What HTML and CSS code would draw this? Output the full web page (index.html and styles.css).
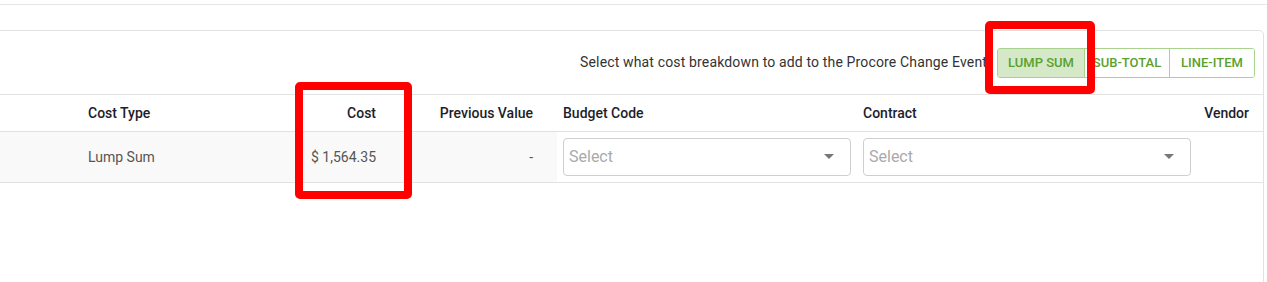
FILE: index.html
```html
<!DOCTYPE html>
<html>
<head>
<meta charset="utf-8">
<link rel="stylesheet" href="styles.css">
</head>
<body>
<div class="topbar"></div>
<div class="card">
  <div class="toolbar">
    <span class="toolbar-label">Select what cost breakdown to add to the Procore Change Event</span>
    <div class="btn-group">
      <button class="btn active">LUMP SUM</button>
      <button class="btn">SUB-TOTAL</button>
      <button class="btn">LINE-ITEM</button>
    </div>
  </div>
  <div class="table">
    <div class="row head">
      <div class="cell c0"></div>
      <div class="cell c-type">Cost Type</div>
      <div class="cell c-cost">Cost</div>
      <div class="cell c-prev">Previous Value</div>
      <div class="cell c-budget">Budget Code</div>
      <div class="cell c-contract">Contract</div>
      <div class="cell c-vendor">Vendor</div>
    </div>
    <div class="row body">
      <div class="cell c0 shade"></div>
      <div class="cell c-type shade">Lump Sum</div>
      <div class="cell c-cost shade">$ 1,564.35</div>
      <div class="cell c-prev shade">-</div>
      <div class="cell c-budget">
        <div class="select select-budget"><span>Select</span><i class="caret"></i></div>
      </div>
      <div class="cell c-contract">
        <div class="select select-contract"><span>Select</span><i class="caret"></i></div>
      </div>
      <div class="cell c-vendor"></div>
    </div>
  </div>
</div>
<div class="mark mark-cost"></div>
<div class="mark mark-lump"></div>
</body>
</html>
```
FILE: styles.css
```css
html, body {
  margin: 0;
  padding: 0;
  background: #fff;
  font-family: Roboto, "Liberation Sans", Arial, sans-serif;
  width: 1267px;
  height: 282px;
  overflow: hidden;
  position: relative;
}

.topbar {
  height: 4px;
  border-bottom: 1px solid #e6e6e6;
  margin-bottom: 25px;
}

.card {
  width: 1264px;
  height: 260px;
  border: 1px solid #e2e2e2;
  border-left: 0;
  border-radius: 0 5px 0 0;
  box-sizing: border-box;
}

.toolbar {
  height: 63px;
  display: flex;
  align-items: center;
  justify-content: flex-end;
  gap: 10px;
  padding-right: 8px;
  border-bottom: 1px solid #e2e2e2;
}

.toolbar-label {
  font-size: 14px;
  letter-spacing: 0.15px;
  color: #333;
  margin-top: -1px;
}

.btn-group {
  display: flex;
  border: 1px solid #a9d28f;
  border-radius: 3px;
  overflow: hidden;
  height: 30px;
  box-sizing: border-box;
}

.btn {
  font-family: Roboto, "Liberation Sans", Arial, sans-serif;
  font-size: 13px;
  font-weight: 500;
  color: #5aa12d;
  background: #fff;
  border: 0;
  border-left: 1px solid #a9d28f;
  padding: 0;
  height: 28px;
}
.btn:first-child { border-left: 0; width: 86px; }
.btn:nth-child(2) { width: 85px; }
.btn:nth-child(3) { width: 85px; }
.btn.active { background: #d5e9c8; }

.row {
  display: flex;
  border-bottom: 1px solid #e2e2e2;
}
.row.head { height: 36px; }
.row.body { height: 50px; }

.cell {
  display: flex;
  align-items: center;
  box-sizing: border-box;
  flex: none;
  font-size: 14px;
}
.head .cell {
  font-weight: 500;
  color: #1d1d2b;
}
.body .cell { color: #555; padding-bottom: 1px; }
.shade { background: #f9f9f9; }

.c0 { width: 80px; }
.c-type { width: 160px; padding-left: 8px; }
.c-cost { width: 144px; justify-content: flex-end; padding-right: 8px; }
.c-prev { width: 173px; justify-content: flex-end; padding-right: 24px; }
.c-budget { width: 300px; padding-left: 6px; }
.c-contract { width: 340px; padding-left: 6px; }
.c-vendor { width: 66px; justify-content: flex-end; padding-right: 14px; }

.select {
  height: 38px;
  border: 1px solid #cfcfcf;
  border-radius: 4px;
  box-sizing: border-box;
  display: flex;
  align-items: center;
  justify-content: space-between;
  padding: 0 16px 0 5px;
}
.select-budget { width: 288px; }
.select-contract { width: 328px; }
.select span {
  font-size: 16px;
  color: #aaa;
}
.caret {
  width: 0;
  height: 0;
  border-left: 5px solid transparent;
  border-right: 5px solid transparent;
  border-top: 5px solid #777;
}

.mark {
  position: absolute;
  border: 8px solid #ff0000;
  border-radius: 5px;
  box-sizing: border-box;
}
.mark-cost { left: 295px; top: 82px; width: 117px; height: 117px; }
.mark-lump { left: 985px; top: 21px; width: 110px; height: 73px; }
```
